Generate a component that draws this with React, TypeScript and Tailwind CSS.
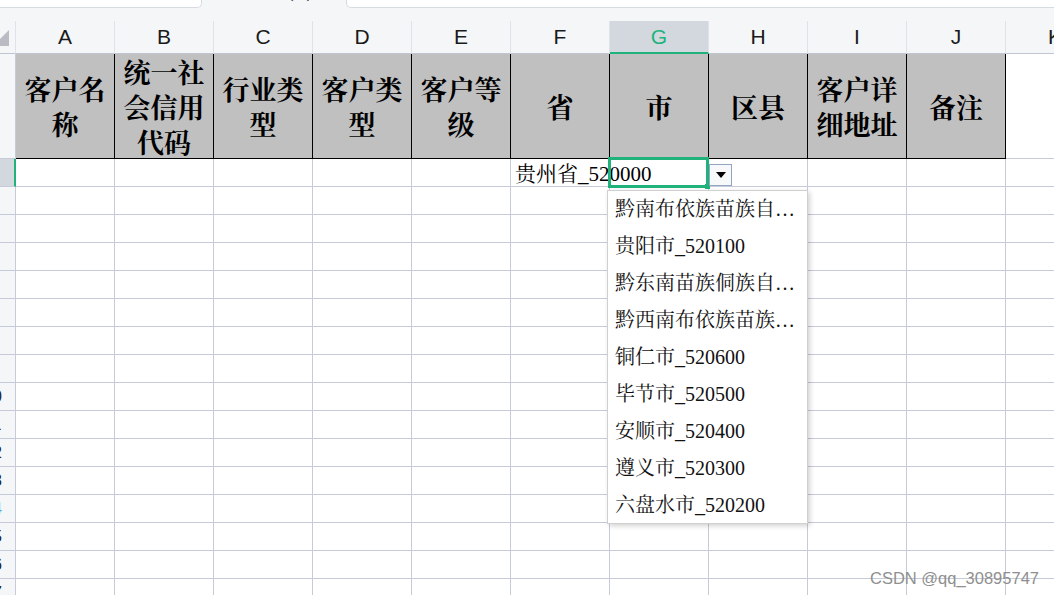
import React from 'react';

const COLS = ['A', 'B', 'C', 'D', 'E', 'F', 'G', 'H', 'I', 'J', 'K'];
const HEAD = ['客户名称', '统一社会信用代码', '行业类型', '客户类型', '客户等级', '省', '市', '区县', '客户详细地址', '备注'];
const ITEMS = [
  '黔南布依族苗族自治州_522700',
  '贵阳市_520100',
  '黔东南苗族侗族自治州_522600',
  '黔西南布依族苗族自治州_522300',
  '铜仁市_520600',
  '毕节市_520500',
  '安顺市_520400',
  '遵义市_520300',
  '六盘水市_520200',
];

export default function App() {
  const rows = Array.from({ length: 16 }, (_, i) => i + 2);
  return (
    <div className="relative w-[1054px] h-[595px] overflow-hidden bg-white font-['Liberation_Serif','Noto_Serif_CJK_SC','Noto_Sans_CJK_SC',serif] text-black">
      {/* top tab strip */}
      <div className="flex h-[21px] bg-[#f5f6f8] items-start">
        <div className="w-[202px] h-[8px] shrink-0 bg-white border-b border-r border-[#d6dae1] rounded-br-[5px]" />
        <div className="w-[144px] h-[8px] shrink-0 overflow-hidden">
          <div className="-mt-[17px] pl-[86px] text-[16px] leading-[20px] text-[#444] font-['Liberation_Sans',sans-serif] whitespace-pre">(   )</div>
        </div>
        <div className="flex-1 h-[8px] bg-white border-b border-l border-[#d6dae1] rounded-bl-[5px]" />
      </div>

      {/* column header */}
      <div className="flex h-[33px] bg-[#f5f6f8] font-['Liberation_Sans',sans-serif]">
        <div className="w-[16px] shrink-0 border-r border-b border-r-[#dfe2e8] border-b-[#c0c6d2] overflow-hidden flex items-end pb-[7px]">
          <svg width="9" height="16" viewBox="0 0 9 16">
            <polygon points="9,0 9,16 -7,16" fill="#b9bcc2" />
          </svg>
        </div>
        {COLS.map((c) =>
          c === 'G' ? (
            <div
              key={c}
              className="w-[99px] shrink-0 bg-[#d3d7de] border-r border-r-[#dfe2e8] border-b-2 border-b-[#1fb27a] flex items-center justify-center text-[21px] text-[#1db47c]"
            >
              {c}
            </div>
          ) : (
            <div
              key={c}
              className="w-[99px] shrink-0 border-r border-b border-r-[#dfe2e8] border-b-[#c0c6d2] flex items-center justify-center text-[21px] text-[#1a1a1a]"
            >
              {c}
            </div>
          )
        )}
      </div>

      {/* row 1: header titles */}
      <div className="flex h-[105px]">
        <div className="w-[16px] shrink-0 bg-[#f5f6f8] border-r border-b border-[#c5cbd9]" />
        {HEAD.map((h) => (
          <div
            key={h}
            className="w-[99px] shrink-0 bg-[#c0c0c0] border-r border-b border-black flex items-center justify-center text-center px-[6px] font-bold text-[27px] leading-[35px]"
          >
            <span className="translate-y-[3px]">{h}</span>
          </div>
        ))}
        <div className="w-[99px] shrink-0 border-b border-[#c5cbd9]" />
      </div>

      {/* data rows */}
      {rows.map((r) => (
        <div key={r} className="flex h-[28px]">
          <div
            className={
              r === 2
                ? 'w-[16px] shrink-0 bg-[#d3d7de] border-b border-b-[#c5cbd9] border-r-2 border-r-[#1fb27a] overflow-hidden flex items-center'
                : 'w-[16px] shrink-0 bg-[#f5f6f8] border-b border-r border-[#c5cbd9] overflow-hidden flex items-center'
            }
          >
            <span
              className={
                r === 14
                  ? "shrink-0 w-[40px] -ml-[27px] text-center text-[16px] font-['Liberation_Sans',sans-serif] text-[#4aa8e6]"
                  : "shrink-0 w-[40px] -ml-[27px] text-center text-[16px] font-['Liberation_Sans',sans-serif] text-[#222]"
              }
            >
              {r}
            </span>
          </div>
          {COLS.map((c) => (
            <div key={c} className="w-[99px] shrink-0 border-r border-b border-[#c5cbd9] flex items-center">
              {r === 2 && c === 'F' ? (
                <span className="pl-[4px] pt-[3px] whitespace-nowrap text-[21px] leading-[24px]">贵州省_520000</span>
              ) : null}
            </div>
          ))}
        </div>
      ))}

      {/* selected cell border */}
      <div className="absolute left-[608px] top-[157px] w-[101px] h-[31px] border-[3px] border-[#1fb27a]" />
      <div className="absolute left-[705px] top-[184px] w-[5px] h-[5px] bg-[#1fb27a]" />

      {/* dropdown button */}
      <div className="absolute left-[709px] top-[164px] w-[23px] h-[22px] bg-[#f7f8fa] border border-[#93a5c0] flex items-center justify-center">
        <svg width="10" height="6" viewBox="0 0 10 6">
          <polygon points="0,0 10,0 5,6" fill="#000" />
        </svg>
      </div>

      {/* dropdown list */}
      <div className="absolute left-[607px] top-[190px] w-[201px] h-[334px] bg-white border border-[#d0d0d0] shadow-[2px_2px_5px_rgba(0,0,0,0.18)]">
        {ITEMS.map((it) => (
          <div
            key={it}
            className="h-[37px] leading-[37px] px-[7px] whitespace-nowrap overflow-hidden text-ellipsis text-[20px] text-[#111]"
          >
            {it}
          </div>
        ))}
      </div>

      {/* watermark */}
      <div className="absolute right-[15px] bottom-[8px] text-[16.5px] leading-[18px] text-[#8f8f8f] font-['Liberation_Sans',sans-serif]">
        CSDN @qq_30895747
      </div>
    </div>
  );
}
